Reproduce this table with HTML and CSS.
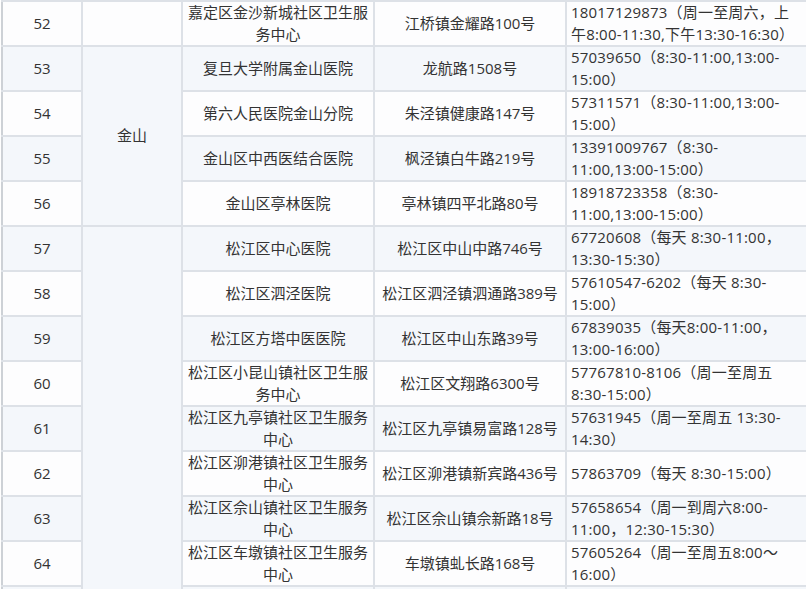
FILE: index.html
```html
<!DOCTYPE html>
<html lang="zh-CN">
<head>
<meta charset="utf-8">
<title>接种点列表</title>
<link rel="stylesheet" href="styles.css">
</head>
<body>
<table class="sites">
  <colgroup>
    <col class="c-no">
    <col class="c-dist">
    <col class="c-name">
    <col class="c-addr">
    <col class="c-phone">
  </colgroup>
  <tbody>
    <tr>
      <td class="no">52</td>
      <td class="dist"></td>
      <td class="name">嘉定区金沙新城社区卫生服<br>务中心</td>
      <td class="addr">江桥镇金耀路100号</td>
      <td class="phone">18017129873（周一至周六，上<br>午8:00-11:30,下午13:30-16:30）</td>
    </tr>
    <tr>
      <td class="no">53</td>
      <td class="dist" rowspan="4">金山</td>
      <td class="name">复旦大学附属金山医院</td>
      <td class="addr">龙航路1508号</td>
      <td class="phone">57039650（8:30-11:00,13:00-<br>15:00）</td>
    </tr>
    <tr>
      <td class="no">54</td>
      <td class="name">第六人民医院金山分院</td>
      <td class="addr">朱泾镇健康路147号</td>
      <td class="phone">57311571（8:30-11:00,13:00-<br>15:00）</td>
    </tr>
    <tr>
      <td class="no">55</td>
      <td class="name">金山区中西医结合医院</td>
      <td class="addr">枫泾镇白牛路219号</td>
      <td class="phone">13391009767（8:30-<br>11:00,13:00-15:00）</td>
    </tr>
    <tr>
      <td class="no">56</td>
      <td class="name">金山区亭林医院</td>
      <td class="addr">亭林镇四平北路80号</td>
      <td class="phone">18918723358（8:30-<br>11:00,13:00-15:00）</td>
    </tr>
    <tr>
      <td class="no">57</td>
      <td class="dist" rowspan="9"></td>
      <td class="name">松江区中心医院</td>
      <td class="addr">松江区中山中路746号</td>
      <td class="phone">67720608（每天 8:30-11:00，<br>13:30-15:30）</td>
    </tr>
    <tr>
      <td class="no">58</td>
      <td class="name">松江区泗泾医院</td>
      <td class="addr">松江区泗泾镇泗通路389号</td>
      <td class="phone">57610547-6202（每天 8:30-<br>15:00）</td>
    </tr>
    <tr>
      <td class="no">59</td>
      <td class="name">松江区方塔中医医院</td>
      <td class="addr">松江区中山东路39号</td>
      <td class="phone">67839035（每天8:00-11:00，<br>13:00-16:00）</td>
    </tr>
    <tr>
      <td class="no">60</td>
      <td class="name">松江区小昆山镇社区卫生服<br>务中心</td>
      <td class="addr">松江区文翔路6300号</td>
      <td class="phone">57767810-8106（周一至周五<br>8:30-15:00）</td>
    </tr>
    <tr>
      <td class="no">61</td>
      <td class="name">松江区九亭镇社区卫生服务<br>中心</td>
      <td class="addr">松江区九亭镇易富路128号</td>
      <td class="phone">57631945（周一至周五 13:30-<br>14:30）</td>
    </tr>
    <tr>
      <td class="no">62</td>
      <td class="name">松江区泖港镇社区卫生服务<br>中心</td>
      <td class="addr">松江区泖港镇新宾路436号</td>
      <td class="phone">57863709（每天 8:30-15:00）</td>
    </tr>
    <tr>
      <td class="no">63</td>
      <td class="name">松江区佘山镇社区卫生服务<br>中心</td>
      <td class="addr">松江区佘山镇佘新路18号</td>
      <td class="phone">57658654（周一到周六8:00-<br>11:00，12:30-15:30）</td>
    </tr>
    <tr>
      <td class="no">64</td>
      <td class="name">松江区车墩镇社区卫生服务<br>中心</td>
      <td class="addr">车墩镇虬长路168号</td>
      <td class="phone">57605264（周一至周五8:00～<br>16:00）</td>
    </tr>
    <tr class="tail">
      <td class="no"></td>
      <td class="name"></td>
      <td class="addr"></td>
      <td class="phone"></td>
    </tr>
  </tbody>
</table>
</body>
</html>
```

FILE: styles.css
```css
html, body {
  margin: 0;
  padding: 0;
  background: #ffffff;
  overflow: hidden;
  width: 806px;
  height: 589px;
}

.sites {
  border-collapse: collapse;
  table-layout: fixed;
  width: 824px;
  margin: 0 0 0 1px;
  font-family: "Open Sans", "Noto Sans CJK SC", sans-serif;
  font-size: 15px;
  line-height: 21.5px;
  color: #333333;
}

.c-no { width: 80px; }
.c-dist { width: 100px; }
.c-name { width: 192px; }
.c-addr { width: 192px; }
.c-phone { width: 260px; }

.sites td {
  border: 2px solid #dde1e7;
  padding: 0 4px;
  height: 43px;
  text-align: center;
  vertical-align: middle;
  white-space: nowrap;
  overflow: hidden;
}

.sites td.no {
  border-left: 2px solid #cdd1d6;
}

.sites td.phone {
  text-align: left;
  padding-left: 4px;
  letter-spacing: 0.2px;
}

.sites tr {
  background: #fdfdfe;
}

.sites tr:nth-child(even) {
  background: #f4f7fb;
}

.sites tr.tail td {
  height: 20px;
}
```
